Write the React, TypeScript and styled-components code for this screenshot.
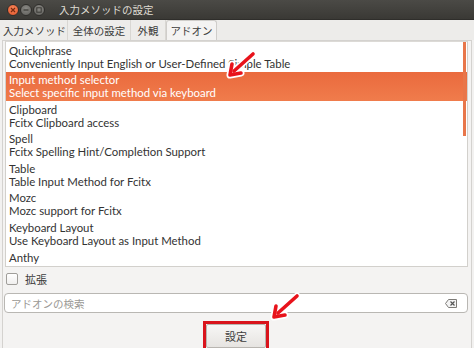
import React from "react";
import styled, { createGlobalStyle } from "styled-components";

const Global = createGlobalStyle`
  html, body { margin: 0; padding: 0; background: #f2f1f0; }
  body { width: 474px; height: 348px; overflow: hidden; font-family: "Lato", "Noto Sans CJK JP", sans-serif; }
  * { box-sizing: border-box; }
`;

const cjk = `"Noto Sans CJK JP", sans-serif`;

const Window = styled.div`
  position: relative;
  width: 474px;
  height: 348px;
  display: flex;
  flex-direction: column;
  background: #f2f1f0;
  overflow: hidden;
`;

const TitleBar = styled.div`
  height: 20px;
  flex: none;
  display: flex;
  align-items: center;
  padding-left: 7px;
  background: linear-gradient(#4b4a46, #3a3935);
  border-bottom: 1px solid #2f2e2b;
`;

const WinButton = styled.div<{ $kind: "close" | "min" | "max" }>`
  width: 12px;
  height: 12px;
  border-radius: 50%;
  margin-right: 1px;
  display: flex;
  align-items: center;
  justify-content: center;
  background: ${(p) =>
    p.$kind === "close"
      ? "radial-gradient(circle at 50% 35%, #f8875a, #e2542a)"
      : "radial-gradient(circle at 50% 35%, #8a8985, #5e5d59)"};
  border: 1px solid #2f2e2b;
`;

const Title = styled.div`
  margin-left: 13px;
  color: #dfdbd2;
  font-size: 10.5px;
  font-family: ${cjk};
`;

const TabBar = styled.div`
  height: 20px;
  flex: none;
  display: flex;
  align-items: stretch;
  padding-left: 2px;
  background: #edecea;
`;

const Tab = styled.div<{ $active?: boolean; $w: number }>`
  width: ${(p) => p.$w}px;
  display: flex;
  align-items: center;
  justify-content: center;
  font-size: 10.5px;
  font-family: ${cjk};
  color: #3c3c3c;
  background: ${(p) => (p.$active ? "#f4f3f2" : "transparent")};
  border-right: 1px solid ${(p) => (p.$active ? "#cfcdca" : "#d9d7d3")};
  border-left: ${(p) => (p.$active ? "1px solid #cfcdca" : "none")};
  border-top: ${(p) => (p.$active ? "1px solid #cfcdca" : "none")};
  border-radius: ${(p) => (p.$active ? "3px 3px 0 0" : "0")};
`;

const Frame = styled.div`
  flex: 1;
  display: flex;
  flex-direction: column;
  margin: 0 2px;
  border: 1px solid #d4d2cf;
  border-bottom: none;
  background: #f4f3f2;
  padding: 0 3px 0 1px;
`;

const List = styled.div`
  position: relative;
  height: 226px;
  flex: none;
  margin-left: 1px;
  background: #ffffff;
  border: 1px solid #d2d0cc;
  border-top: 1px solid #dcdad6;
  overflow: hidden;
`;

const Row = styled.div<{ $selected?: boolean }>`
  height: 29.6px;
  padding: 1.5px 0 0 3px;
  display: flex;
  flex-direction: column;
  font-size: 11.4px;
  line-height: 13px;
  color: ${(p) => (p.$selected ? "#ffffff" : "#333333")};
  background: ${(p) => (p.$selected ? "linear-gradient(#ea6a3d, #f07c4c)" : "transparent")};
  white-space: nowrap;
`;

const Thumb = styled.div`
  position: absolute;
  right: 1px;
  top: 0;
  width: 3px;
  height: 94px;
  background: #e8764a;
`;

const CheckRow = styled.div`
  height: 23px;
  flex: none;
  display: flex;
  align-items: center;
  padding-left: 2px;
  gap: 7px;
  font-size: 11px;
  font-family: ${cjk};
  color: #3c3c3c;
`;

const Box = styled.div`
  width: 12px;
  height: 12px;
  border: 1px solid #a09e9a;
  border-radius: 2px;
  background: linear-gradient(#ffffff, #f0efee);
`;

const Search = styled.div`
  margin-top: 3px;
  height: 20px;
  flex: none;
  display: flex;
  align-items: center;
  justify-content: space-between;
  padding: 0 10px 0 6px;
  background: #ffffff;
  border: 1px solid #b9b7b3;
  border-radius: 4px;
  font-size: 10.5px;
  font-family: ${cjk};
  color: #9a9894;
`;

const ButtonRow = styled.div`
  flex: 1;
  display: flex;
  justify-content: center;
  padding-top: 8px;
`;

const Highlight = styled.div`
  width: 66px;
  height: 30px;
  border: 3px solid #d9141c;
  display: flex;
`;

const Button = styled.div`
  flex: 1;
  display: flex;
  align-items: center;
  justify-content: center;
  background: linear-gradient(#f7f6f5, #e6e4e1);
  border: 1px solid #b8b5b0;
  border-radius: 2px;
  font-size: 11px;
  font-family: ${cjk};
  color: #3c3c3c;
`;

const Arrow = styled.svg<{ $x: number; $y: number }>`
  position: absolute;
  left: ${(p) => p.$x}px;
  top: ${(p) => p.$y}px;
  overflow: visible;
`;

const items: [string, string][] = [
  ["Quickphrase", "Conveniently Input English or User-Defined Simple Table"],
  ["Input method selector", "Select specific input method via keyboard"],
  ["Clipboard", "Fcitx Clipboard access"],
  ["Spell", "Fcitx Spelling Hint/Completion Support"],
  ["Table", "Table Input Method for Fcitx"],
  ["Mozc", "Mozc support for Fcitx"],
  ["Keyboard Layout", "Use Keyboard Layout as Input Method"],
  ["Anthy", "Anthy Wrapper For Fcitx"],
];

const tabs: [string, number][] = [
  ["入力メソッド", 66],
  ["全体の設定", 63],
  ["外観", 35],
  ["アドオン", 51],
];

const RedArrow = ({ x, y }: { x: number; y: number }) => (
  <Arrow $x={x} $y={y} width="30" height="26" viewBox="0 0 30 26">
    <g strokeLinecap="round" strokeLinejoin="round" fill="none">
      <path d="M27 2 L8 19" stroke="#ffffff" strokeWidth="7" />
      <path d="M4 23 L6 12 M4 23 L15 21" stroke="#ffffff" strokeWidth="7" />
      <path d="M27 2 L8 19" stroke="#e8131b" strokeWidth="3.6" />
      <path d="M4 23 L6 12 M4 23 L15 21" stroke="#e8131b" strokeWidth="3.6" />
    </g>
  </Arrow>
);

export default function App() {
  return (
    <Window>
      <Global />
      <TitleBar>
        <WinButton $kind="close">
          <svg width="6" height="6" viewBox="0 0 6 6">
            <path d="M1 1L5 5M5 1L1 5" stroke="#7a2a10" strokeWidth="1.2" />
          </svg>
        </WinButton>
        <WinButton $kind="min">
          <svg width="6" height="6" viewBox="0 0 6 6">
            <path d="M0.5 3H5.5" stroke="#3a3935" strokeWidth="1.2" />
          </svg>
        </WinButton>
        <WinButton $kind="max">
          <svg width="6" height="6" viewBox="0 0 6 6">
            <rect x="0.8" y="0.8" width="4.4" height="4.4" fill="none" stroke="#3a3935" strokeWidth="1" />
          </svg>
        </WinButton>
        <Title>入力メソッドの設定</Title>
      </TitleBar>
      <TabBar>
        {tabs.map(([t, w], i) => (
          <Tab key={t} $w={w} $active={i === 3}>
            {t}
          </Tab>
        ))}
      </TabBar>
      <Frame>
        <List>
          {items.map(([name, desc], i) => (
            <Row key={name} $selected={i === 1}>
              <span>{name}</span>
              <span>{desc}</span>
            </Row>
          ))}
          <Thumb />
        </List>
        <CheckRow>
          <Box />
          拡張
        </CheckRow>
        <Search>
          <span>アドオンの検索</span>
          <svg width="12" height="9" viewBox="0 0 12 9">
            <path d="M3.5 0.5H11.5V8.5H3.5L0.5 4.5Z" fill="#f4f4f4" stroke="#7d7b77" strokeWidth="1" />
            <path d="M5.5 2.5L9.5 6.5M9.5 2.5L5.5 6.5" stroke="#555" strokeWidth="1.2" />
          </svg>
        </Search>
        <ButtonRow>
          <Highlight>
            <Button>設定</Button>
          </Highlight>
        </ButtonRow>
      </Frame>
      <RedArrow x={226} y={52} />
      <RedArrow x={270} y={294} />
    </Window>
  );
}
